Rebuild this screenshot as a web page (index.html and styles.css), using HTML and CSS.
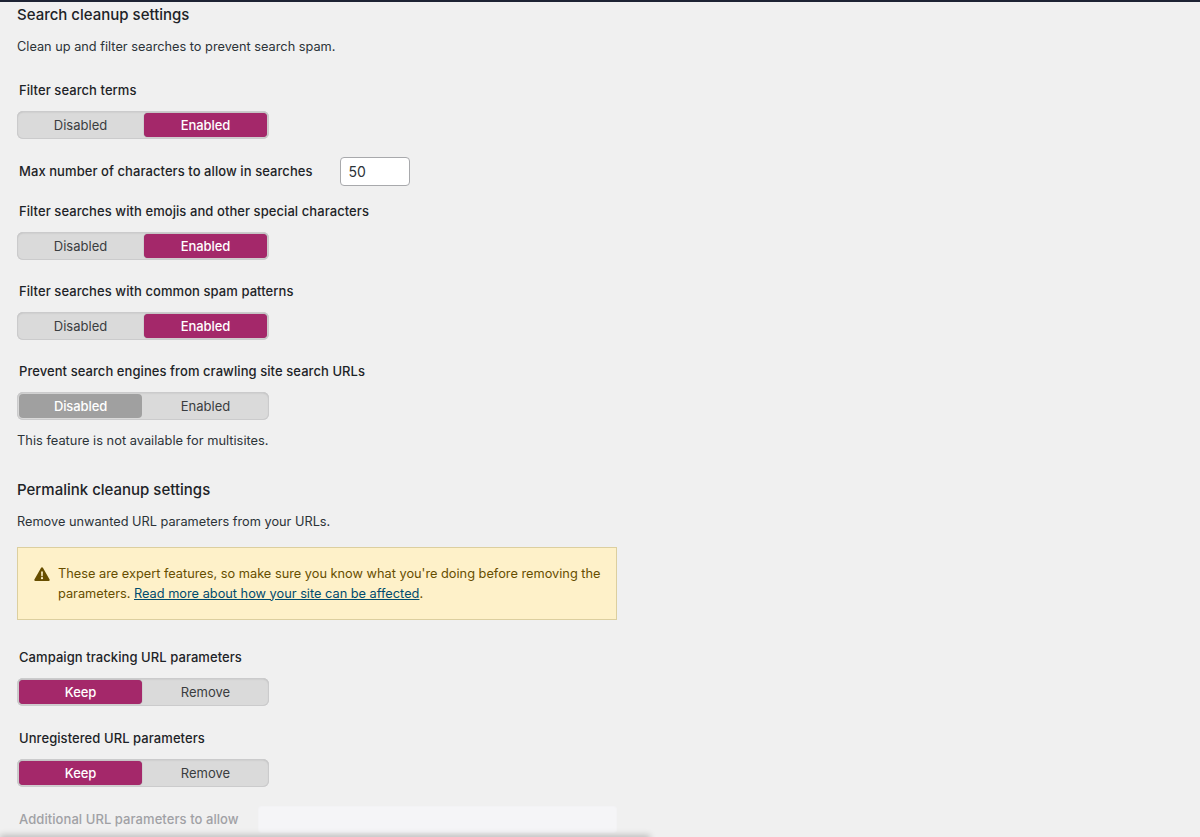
FILE: index.html
```html
<!DOCTYPE html>
<html lang="en">
<head>
<meta charset="utf-8">
<title>Crawl settings</title>
<link rel="stylesheet" href="styles.css">
</head>
<body>
<div class="topbar"></div>
<main class="page">
  <h2 class="heading">Search cleanup settings</h2>
  <p class="desc">Clean up and filter searches to prevent search spam.</p>

  <div class="field first">
    <div class="label">Filter search terms</div>
    <div class="toggle"><span class="opt">Disabled</span><span class="opt on">Enabled</span></div>
  </div>

  <div class="inline-row max-row">
    <label class="label" for="max">Max number of characters to allow in searches</label>
    <input class="num" id="max" type="text" value="50">
  </div>

  <div class="field emoji">
    <div class="label">Filter searches with emojis and other special characters</div>
    <div class="toggle"><span class="opt">Disabled</span><span class="opt on">Enabled</span></div>
  </div>

  <div class="field">
    <div class="label">Filter searches with common spam patterns</div>
    <div class="toggle"><span class="opt">Disabled</span><span class="opt on">Enabled</span></div>
  </div>

  <div class="field">
    <div class="label">Prevent search engines from crawling site search URLs</div>
    <div class="toggle"><span class="opt off">Disabled</span><span class="opt">Enabled</span></div>
  </div>
  <p class="note">This feature is not available for multisites.</p>

  <h2 class="heading second">Permalink cleanup settings</h2>
  <p class="desc">Remove unwanted URL parameters from your URLs.</p>

  <div class="alert">
    <svg class="alert-icon" viewBox="0 0 16 16" aria-hidden="true"><path fill-rule="evenodd" d="M8 1.2c.4 0 .7.2.9.5l6.7 11.8c.4.7-.1 1.5-.9 1.5H1.300c-.8 0-1.300-.8-.9-1.500L7.100 1.700c.2-.3.5-.5.9-.5zM7.100 5.600l.2 4.600h1.400l.2-4.600H7.100zM8 11.100a1.100 1.100 0 1 0 0 2.200 1.100 1.100 0 0 0 0-2.200z"/></svg>
    <p class="alert-text">These are expert features, so make sure you know what you're doing before removing the parameters. <a href="#">Read more about how your site can be affected</a>.</p>
  </div>

  <div class="field campaign">
    <div class="label">Campaign tracking URL parameters</div>
    <div class="toggle"><span class="opt on">Keep</span><span class="opt">Remove</span></div>
  </div>

  <div class="field unregistered">
    <div class="label">Unregistered URL parameters</div>
    <div class="toggle"><span class="opt on">Keep</span><span class="opt">Remove</span></div>
  </div>

  <div class="inline-row extra-row">
    <label class="label muted" for="extra">Additional URL parameters to allow</label>
    <input class="text-disabled" id="extra" type="text" disabled>
  </div>
</main>
<div class="bottom-shadow"></div>
</body>
</html>
```
FILE: styles.css
```css
* { box-sizing: border-box; }
html, body { height: 100%; }
body {
  margin: 0;
  background: #f0f0f0;
  color: #1d2327;
  font-family: Inter, "Liberation Sans", sans-serif;
  font-size: 12.850px;
  line-height: 20px;
  overflow: hidden;
  position: relative;
}
.topbar { height: 2px; background: #1d2333; }
.page { padding: 3px 0 0 17px; width: 640px; }
.heading { margin: 0; font-size: 15px; line-height: 20px; font-weight: 500; color: #1d2327; }
.heading.second { margin-top: 29px; }
.desc { margin: 12px 0 0; color: #2c3338; font-size: 12.750px; }
.field { margin-top: 21px; }
.field.first { margin-top: 23px; }
.field.emoji { margin-top: 15px; }
.field.campaign { margin-top: 27px; }
.field.unregistered { margin-top: 22px; }
.label { display: block; margin-left: 2px; font-weight: 500; font-size: 13px; letter-spacing: 0.07px; color: #1d2327; }
.toggle {
  display: flex;
  gap: 2px;
  width: 252px;
  height: 28px;
  margin-top: 11px;
  padding: 2px;
  background: #dadada;
  border-radius: 6px;
  box-shadow: inset 0 0 0 1px #cbcbcc, inset 0 1px 2px rgba(0, 0, 0, 0.16);
}
.opt { flex: 1; text-align: center; line-height: 24px; color: #3a3d40; border-radius: 4px; font-size: 13px; }
.opt.on { background: #a4286a; color: #fff; font-weight: 500; letter-spacing: -0.1px; box-shadow: 0 0 1px rgba(60, 0, 40, 0.6); }
.opt.off { background: #a0a0a0; color: #fff; font-weight: 500; letter-spacing: -0.1px; }
.inline-row { display: flex; align-items: center; }
.inline-row .label { margin-bottom: 2px; }
.max-row { margin-top: 18px; }
.num {
  width: 70px;
  height: 29px;
  margin-left: 27px;
  padding: 0 8px;
  border: 1px solid #a8a9ac;
  border-radius: 4px;
  background: #fff;
  color: #2c3338;
  font: 14px Inter, "Liberation Sans", sans-serif;
}
.note { margin: 11px 0 0; color: #2c3338; font-size: 12.850px; }
.alert {
  display: flex;
  gap: 8px;
  width: 600px;
  height: 73px;
  margin-top: 15px;
  padding: 16px 10px 0 16px;
  background: #fef1c9;
  border: 1px solid #dccf9f;
}
.alert-icon { flex: none; width: 16px; height: 16px; margin-top: 2px; fill: #674e00; }
.alert-text { margin: 0; color: #674e00; line-height: 19.500px; font-size: 12.770px; }
.alert-text a { color: #004b6e; }
.extra-row { margin-top: 19px; }
.muted { color: #a0a1a5; white-space: nowrap; }
.text-disabled {
  flex: none;
  width: 359px;
  height: 27px;
  margin-left: 19px;
  border: 1px solid #f3f3f5;
  border-radius: 3px;
  background: #f5f5f7;
}
.bottom-shadow {
  position: absolute;
  left: 0;
  bottom: -8px;
  width: 650px;
  height: 8px;
  box-shadow: 0 -2px 6px rgba(0, 0, 0, 0.22);
}
```
